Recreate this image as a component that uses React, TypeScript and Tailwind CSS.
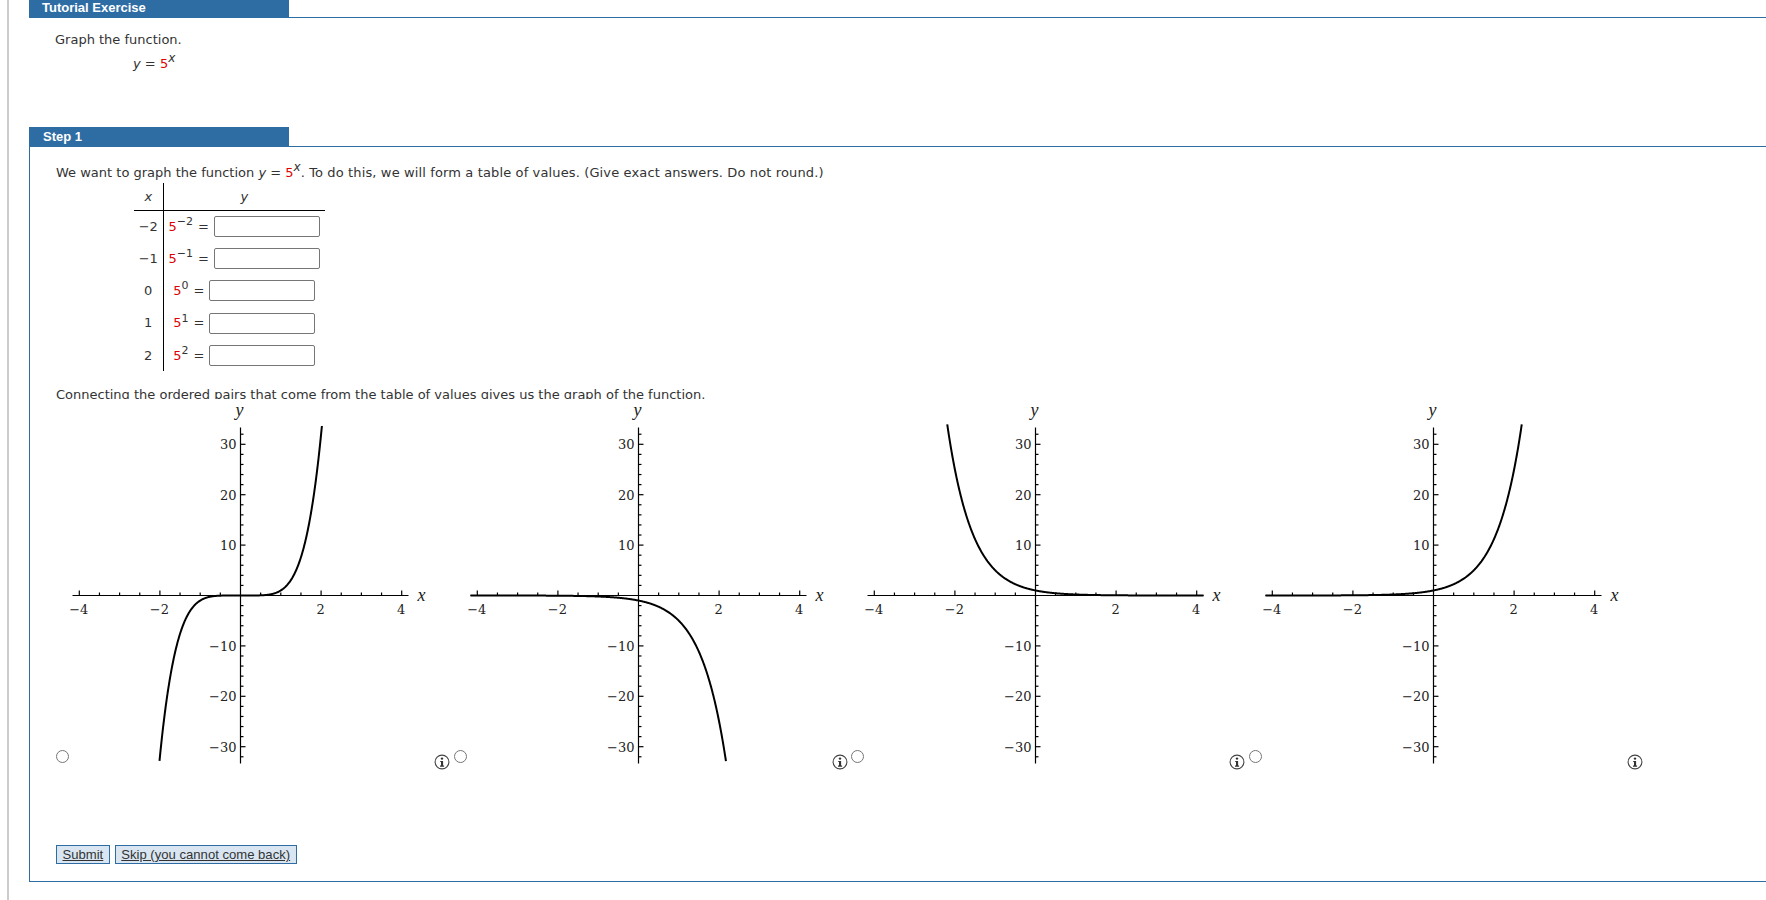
import React from 'react';

type Fn = (x: number) => number;

const UX = 40.3;
const UY = 5.04;
const OX = 170.5;
const OY = 194.5;

function curvePoints(fn: Fn) {
  const pts: string[] = [];
  for (let x = -4.17; x <= 4.17; x += 0.01) {
    const y = fn(x);
    if (y <= 34.1 && y >= -33.3) pts.push(`${(OX + x * UX).toFixed(2)},${(OY - y * UY).toFixed(2)}`);
  }
  return pts.join(' ');
}

function Graph({ fn }: { fn: Fn }) {
  const xTicks: number[] = [];
  for (let i = -8; i <= 8; i++) if (i !== 0) xTicks.push(i / 2);
  const yTicks: number[] = [];
  for (let i = -16; i <= 16; i++) if (i !== 0) yTicks.push(i * 2);

  return (
    <svg width="362" height="368" className="shrink-0 bg-white">
      <g stroke="#000" strokeWidth="1.2">
        <line x1={OX - 168} x2={OX + 168} y1={OY} y2={OY} />
        <line x1={OX} x2={OX} y1={OY - 168} y2={OY + 168} />
        {xTicks.map((t) => (
          <line key={t} x1={OX + t * UX} x2={OX + t * UX} y1={OY} y2={OY - (t % 2 === 0 ? 5 : 3)} />
        ))}
        {yTicks.map((t) => (
          <line key={t} x1={OX} x2={OX + (t % 10 === 0 ? 5 : 3)} y1={OY - t * UY} y2={OY - t * UY} />
        ))}
      </g>
      <polyline points={curvePoints(fn)} fill="none" stroke="#000" strokeWidth="2" />
      <g fill="#222" fontSize="13" fontFamily="'DejaVu Serif', serif">
        {[-4, -2].map((t) => (
          <text key={t} x={OX + t * UX - 0.5} y={OY + 18} textAnchor="middle">{`\u2212${-t}`}</text>
        ))}
        {[2, 4].map((t) => (
          <text key={t} x={OX + t * UX - 0.5} y={OY + 18} textAnchor="middle">{t}</text>
        ))}
        {[30, 20, 10].map((t) => (
          <text key={t} x={OX - 4} y={OY - t * UY + 5} textAnchor="end">{t}</text>
        ))}
        {[-10, -20, -30].map((t) => (
          <text key={t} x={OX - 4} y={OY - t * UY + 5} textAnchor="end">{`\u2212${-t}`}</text>
        ))}
      </g>
      <g fill="#222" fontSize="18" fontStyle="italic" fontFamily="'Liberation Serif', serif">
        <text x={OX - 5} y="15">y</text>
        <text x={OX + 177} y={OY + 5}>x</text>
      </g>
    </svg>
  );
}

function InfoIcon() {
  return (
    <svg width="16" height="16" viewBox="0 0 16 16" className="shrink-0 mt-[353px]">
      <circle cx="8" cy="8" r="6.9" fill="none" stroke="#444" strokeWidth="1.1" />
      <circle cx="8" cy="4.6" r="1.2" fill="#333" />
      <path d="M6.2 7h2.9v4.6h1v1.1H6v-1.1h1V8.1H6.2z" fill="#333" />
    </svg>
  );
}

function GraphOption({ fn }: { fn: Fn }) {
  return (
    <div className="flex items-start w-[397.6px] shrink-0">
      <input type="radio" name="graph" className="m-0 mt-[349px] w-[13px] h-[13px] shrink-0" />
      <div className="ml-px">
        <Graph fn={fn} />
      </div>
      <div className="ml-[2px]">
        <InfoIcon />
      </div>
    </div>
  );
}

function Five({ exp }: { exp: string }) {
  return (
    <span className="whitespace-nowrap">
      <span className="text-[#e00000]">5</span>
      <sup className="text-[11px]">{exp}</sup>
    </span>
  );
}

const rows = [
  { x: '\u22122', exp: '\u22122' },
  { x: '\u22121', exp: '\u22121' },
  { x: '0', exp: '0' },
  { x: '1', exp: '1' },
  { x: '2', exp: '2' },
];

export default function App() {
  return (
    <div className="h-[900px] overflow-hidden bg-white text-[#333] text-[13px] [font-family:'DejaVu_Sans',sans-serif]">
      <div className="ml-[7px] h-full border-l-2 border-[#ccc] pl-[20px]">
        {/* Tutorial header */}
        <div className="flex h-[18px]">
          <div className="w-[260px] bg-[#2e6da4] text-white font-bold pl-[13px] leading-[15px] [font-family:'Liberation_Sans',sans-serif]">
            Tutorial Exercise
          </div>
          <div className="flex-1 border-b border-[#2e6da4]" />
        </div>
        <p className="ml-[26px] mt-[14px] leading-[16px]">Graph the function.</p>
        <p className="ml-[104px] mt-[8px] leading-[16px]">
          <i>y</i> = <span className="text-[#e00000]">5</span>
          <sup className="italic text-[12px]">x</sup>
        </p>

        {/* Step 1 */}
        <div className="mt-[55px] border-l border-b border-[#2e6da4] h-[755px]">
          <div className="flex h-[20px] -ml-px">
            <div className="w-[260px] bg-[#2e6da4] text-white font-bold pl-[14px] leading-[19px] [font-family:'Liberation_Sans',sans-serif]">
              Step 1
            </div>
            <div className="flex-1 border-b border-[#2e6da4]" />
          </div>
          <div className="pl-[26px]">
            <p className="mt-[16px] h-[20px] leading-[20px] whitespace-nowrap">
              We want to graph the function <i>y</i> = <span className="text-[#e00000]">5</span>
              <sup className="italic text-[12px]">x</sup>
              <span className="tracking-[0.13px]">. To do this, we will form a table of values. (Give exact answers. Do not round.)</span>
            </p>
            <table className="ml-[78px] border-collapse">
              <thead>
                <tr className="h-[27px]">
                  <th className="w-[29px] p-0 font-normal italic border-r border-b border-black">x</th>
                  <th className="w-[162px] p-0 font-normal italic border-b border-black">y</th>
                </tr>
              </thead>
              <tbody>
                {rows.map((r) => (
                  <tr key={r.x} className="h-[32.3px]">
                    <td className="p-0 text-center border-r border-black">{r.x}</td>
                    <td className="p-0">
                      <div className="flex items-center justify-center gap-[5px]">
                        <Five exp={r.exp} />
                        <span>=</span>
                        <input type="text" className="w-[106px] h-[21px] bg-white border border-[#767676] rounded-[2px]" />
                      </div>
                    </td>
                  </tr>
                ))}
              </tbody>
            </table>
            <div className="mt-[15px] h-[13px] overflow-hidden leading-[18px] whitespace-nowrap">
              Connecting the ordered pairs that come from the table of values gives us the graph of the function.
            </div>
            <div className="flex mt-[2px]">
              <GraphOption fn={(x) => Math.pow(x, 5)} />
              <GraphOption fn={(x) => -Math.pow(5, x)} />
              <GraphOption fn={(x) => Math.pow(5, -x)} />
              <GraphOption fn={(x) => Math.pow(5, x)} />
            </div>
            <div className="flex gap-[5px] mt-[75px]">
              <button className="h-[19px] px-[5.5px] bg-[#d9e6f2] border border-[#2e6da4] underline text-[13.1px] leading-[16px] [font-family:'Liberation_Sans',sans-serif]">
                Submit
              </button>
              <button className="h-[19px] px-[5.5px] bg-[#d9e6f2] border border-[#2e6da4] underline text-[13.1px] leading-[16px] [font-family:'Liberation_Sans',sans-serif]">
                Skip (you cannot come back)
              </button>
            </div>
          </div>
        </div>
      </div>
    </div>
  );
}
